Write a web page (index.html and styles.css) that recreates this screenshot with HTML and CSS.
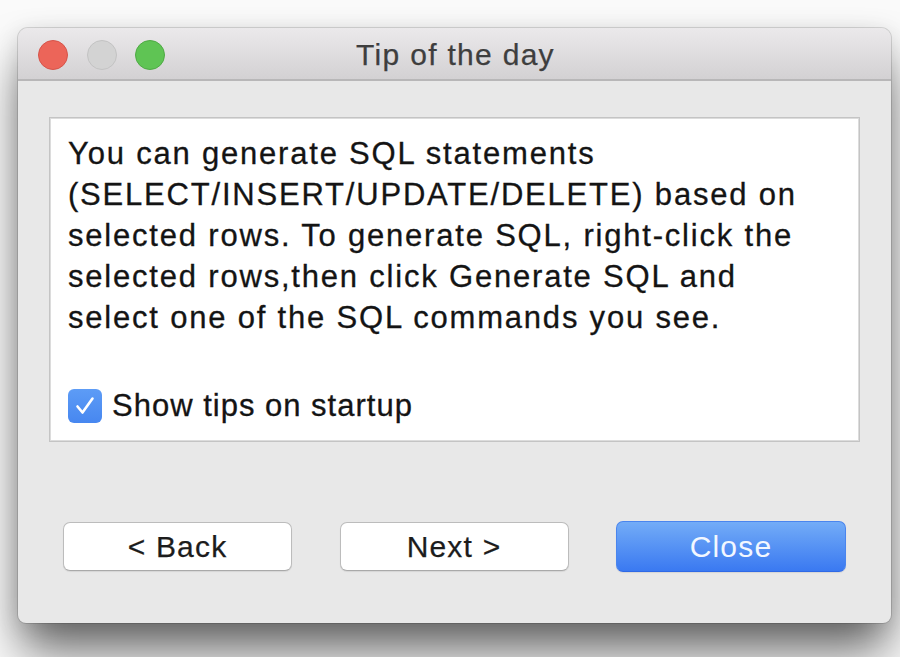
FILE: index.html
```html
<!DOCTYPE html>
<html>
<head>
<meta charset="utf-8">
<title>Tip of the day</title>
<link rel="stylesheet" href="styles.css">
</head>
<body>
<div class="window">
  <div class="titlebar">
    <div class="lights">
      <span class="light red"></span>
      <span class="light gray"></span>
      <span class="light green"></span>
    </div>
    <div class="title">Tip of the day</div>
    <div class="spacer"></div>
  </div>
  <div class="content">
    <div class="tipbox">
      <p class="tip">You can generate SQL statements<br>(SELECT/INSERT/UPDATE/DELETE) based on<br>selected rows. To generate SQL, right-click the<br>selected rows,then click Generate SQL and<br>select one of the SQL commands you see.</p>
      <label class="check">
        <span class="checkbox"><svg viewBox="0 0 34 34" width="34" height="34"><polyline points="9.5,17.5 14.5,23.5 24.5,9.5" fill="none" stroke="#ffffff" stroke-width="2.6" stroke-linecap="round" stroke-linejoin="round"/></svg></span>
        <span class="check-label">Show tips on startup</span>
      </label>
    </div>
    <div class="buttons">
      <button class="btn">&lt; Back</button>
      <button class="btn">Next &gt;</button>
      <button class="btn primary">Close</button>
    </div>
  </div>
</div>
</body>
</html>
```

FILE: styles.css
```css
html, body {
  margin: 0;
  padding: 0;
}
body {
  width: 900px;
  height: 657px;
  overflow: hidden;
  background: #fafafa;
  font-family: "Liberation Sans", Arial, sans-serif;
  color: #1b1b1b;
}
.window {
  margin: 28px 0 0 18px;
  width: 873px;
  height: 595px;
  background: #e8e8e8;
  border-radius: 10px 10px 8px 8px;
  box-shadow: 0 0 0 1px rgba(0, 0, 0, 0.13), 0 32px 48px -4px rgba(0, 0, 0, 0.58), 0 4px 24px rgba(0, 0, 0, 0.12);
  display: flex;
  flex-direction: column;
  overflow: hidden;
}
.titlebar {
  box-sizing: border-box;
  height: 53px;
  padding-top: 2px;
  border-bottom: 2px solid #b8b7b8;
  background: linear-gradient(#ebe9eb, #d3d1d3);
  display: grid;
  grid-template-columns: 1fr auto 1fr;
  align-items: center;
}
.lights {
  display: flex;
  gap: 18.5px;
  padding-left: 20px;
}
.light {
  box-sizing: border-box;
  width: 30px;
  height: 30px;
  border-radius: 50%;
}
.red {
  background: #ec6559;
  border: 1px solid #d6544a;
}
.gray {
  background: #d3d3d3;
  border: 1px solid #c3c3c3;
}
.green {
  background: #5fc454;
  border: 1px solid #4faa45;
}
.title {
  font-size: 30px;
  line-height: 34px;
  letter-spacing: 1.3px;
  color: #3e3e3e;
  padding-left: 2px;
  -webkit-text-stroke: 0.25px #3e3e3e;
}
.content {
  padding: 36px 31px 0;
  display: flex;
  flex-direction: column;
}
.tipbox {
  box-sizing: border-box;
  height: 325px;
  background: #ffffff;
  border: 1px solid #c4c4c4;
  box-shadow: inset 0 0 0 1px #dcdcdc;
  padding: 15px 17px 18px 18px;
  display: flex;
  flex-direction: column;
}
.tip {
  margin: 0;
  font-size: 31px;
  line-height: 41px;
  letter-spacing: 1.8px;
  white-space: nowrap;
  color: #141414;
  -webkit-text-stroke: 0.3px #141414;
}
.check {
  margin-top: auto;
  display: flex;
  align-items: center;
  gap: 10px;
}
.checkbox {
  width: 34px;
  height: 34px;
  border-radius: 6px;
  background: linear-gradient(#5d9cf6, #4787f0);
  display: flex;
}
.check-label {
  font-size: 31px;
  line-height: 34px;
  letter-spacing: 1px;
  color: #141414;
  -webkit-text-stroke: 0.3px #141414;
}
.buttons {
  margin-top: 80px;
  padding: 0 14px;
  display: flex;
  justify-content: space-between;
}
.btn {
  box-sizing: border-box;
  width: 229px;
  height: 49px;
  border-radius: 7px;
  background: #ffffff;
  border: 1px solid #bcbcbc;
  border-bottom-color: #a9a9a9;
  box-shadow: 0 1px 1px rgba(0, 0, 0, 0.08);
  font-family: "Liberation Sans", Arial, sans-serif;
  font-size: 30px;
  letter-spacing: 1.2px;
  color: #1c1c1c;
  -webkit-text-stroke: 0.25px #1c1c1c;
  padding: 0;
}
.btn.primary {
  width: 230px;
  margin-top: -1px;
  height: 51px;
  background: linear-gradient(#73acf7, #3a79f1);
  border: 1px solid #4a85ee;
  border-bottom-color: #2f69e6;
  color: #f2f7ff;
  -webkit-text-stroke: 0;
}
```
